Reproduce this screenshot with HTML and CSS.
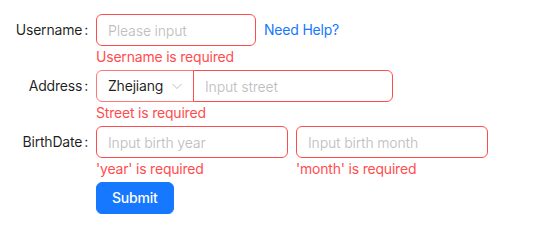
FILE: index.html
```html
<!DOCTYPE html>
<html>
<head>
<meta charset="utf-8">
<link rel="stylesheet" href="styles.css">
</head>
<body>
<form class="form">
  <div class="item">
    <div class="label"><span>Username</span><span class="colon">:</span></div>
    <div class="control">
      <div class="row">
        <input class="input err w-user" placeholder="Please input">
        <a class="link" href="#">Need Help?</a>
      </div>
      <div class="explain">Username is required</div>
    </div>
  </div>
  <div class="item">
    <div class="label"><span>Address</span><span class="colon">:</span></div>
    <div class="control">
      <div class="row compact">
        <div class="select">
          <span class="select-value">Zhejiang</span>
          <svg class="arrow" width="12" height="12" viewBox="0 0 12 12"><polyline points="1.5,4 6,8.5 10.5,4" fill="none" stroke="rgba(0,0,0,0.25)" stroke-width="1"/></svg>
        </div>
        <input class="input err w-street" placeholder="Input street">
      </div>
      <div class="explain">Street is required</div>
    </div>
  </div>
  <div class="item">
    <div class="label"><span>BirthDate</span><span class="colon">:</span></div>
    <div class="control">
      <div class="row gap8">
        <div class="col">
          <input class="input err w-birth" placeholder="Input birth year">
          <div class="explain">'year' is required</div>
        </div>
        <div class="col">
          <input class="input err w-birth" placeholder="Input birth month">
          <div class="explain">'month' is required</div>
        </div>
      </div>
    </div>
  </div>
  <div class="item">
    <div class="label"></div>
    <div class="control">
      <button type="button" class="btn">Submit</button>
    </div>
  </div>
</form>
</body>
</html>
```
FILE: styles.css
```css
* { box-sizing: border-box; }
body {
  margin: 0;
  font-family: Inter, "Noto Sans", sans-serif;
  font-size: 14px;
  letter-spacing: -0.2px;
  color: rgba(0,0,0,0.88);
  background: #fff;
}
.form { padding-top: 14px; }
.item { display: flex; }
.label {
  width: 96px;
  flex: none;
  display: flex;
  justify-content: flex-end;
  height: 32px;
  line-height: 32px;
}
.colon { margin: 0 8px 0 2px; }
.control { display: flex; flex-direction: column; }
.row { display: flex; align-items: center; }
.gap8 { gap: 8px; align-items: flex-start; }
.col { display: flex; flex-direction: column; }
.input {
  height: 32px;
  padding: 4px 11px;
  border: 1px solid #d9d9d9;
  border-radius: 6px;
  font: inherit;
  font-size: 14px;
  letter-spacing: -0.2px;
  color: rgba(0,0,0,0.88);
  outline: none;
  background: #fff;
}
.input::placeholder { color: rgba(0,0,0,0.25); }
.err { border-color: #ff4d4f; }
.w-user { width: 160px; }
.w-street { width: 200px; margin-left: -1px; border-radius: 0 6px 6px 0; }
.w-birth { width: 192px; }
.link {
  margin-left: 8px;
  color: #1677ff;
  text-decoration: none;
  line-height: 22px;
}
.select {
  width: 98px;
  height: 32px;
  border: 1px solid #ff7875;
  border-radius: 6px 0 0 6px;
  display: flex;
  align-items: center;
  padding: 0 11px;
  justify-content: space-between;
}
.select-value { line-height: 22px; }
.arrow { display: block; margin-right: -1px; }
.explain {
  color: #ff4d4f;
  line-height: 22px;
  min-height: 24px;
}
.btn {
  height: 32px;
  padding: 4px 15px;
  border: 1px solid #1677ff;
  background: #1677ff;
  color: #fff;
  border-radius: 6px;
  font: inherit;
  font-size: 14px;
  font-weight: 500;
  letter-spacing: -0.2px;
  line-height: 22px;
  box-shadow: 0 2px 0 rgba(5,145,255,0.1);
}
```
